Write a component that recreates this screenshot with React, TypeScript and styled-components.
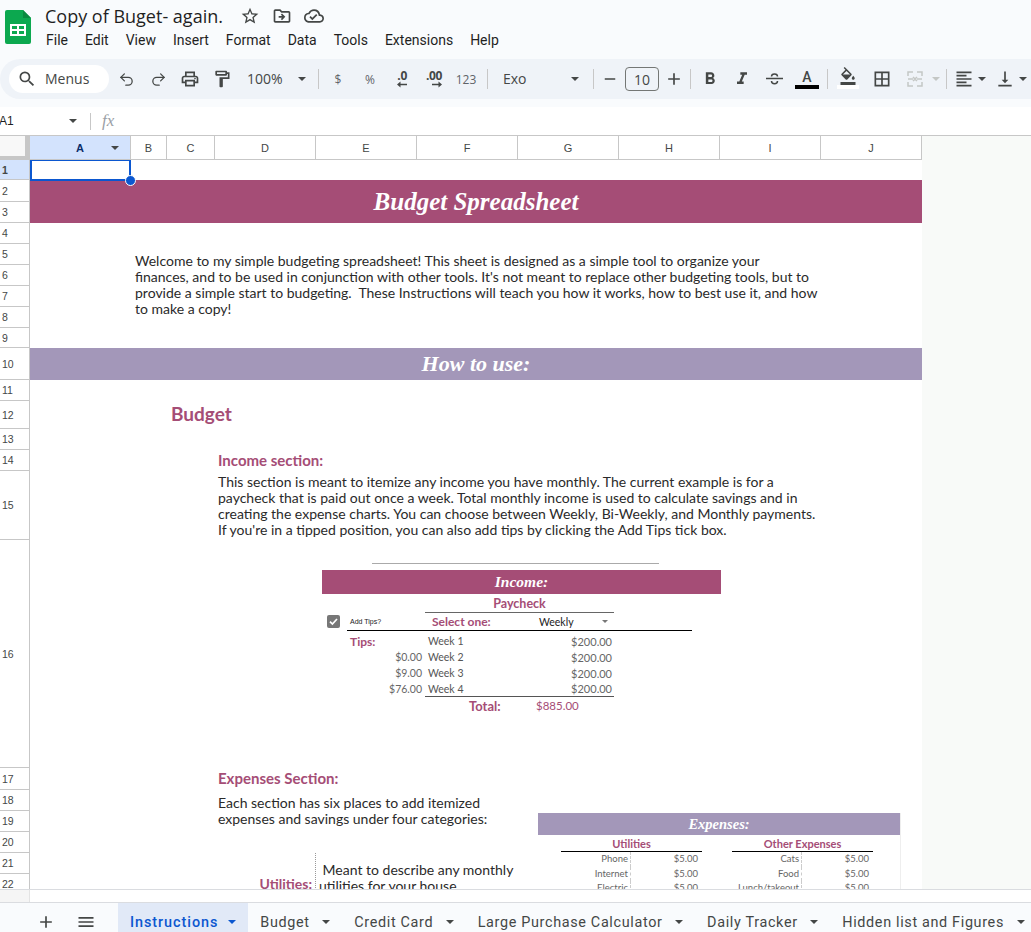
import React from 'react';
import styled, { createGlobalStyle } from 'styled-components';
import { Undo2, Redo2 } from 'lucide-react';
import {
  MdStarBorder,
  MdOutlineDriveFileMove,
  MdOutlineCloudDone,
  MdSearch,
  MdOutlineLocalPrintshop,
  MdOutlineFormatPaint,
  MdRemove,
  MdAdd,
  MdFormatBold,
  MdFormatItalic,
  MdOutlineFormatColorFill,
  MdBorderAll,
  MdFormatAlignLeft,
  MdVerticalAlignBottom,
  MdMenu,
} from 'react-icons/md';

const GlobalStyle = createGlobalStyle`
  html, body {
    margin: 0;
    padding: 0;
    background: #fff;
  }
  * {
    box-sizing: border-box;
  }
`;

const UI_FONT = `'Open Sans', 'Liberation Sans', sans-serif`;
const SHEET_FONT = `'Lato', 'Liberation Sans', sans-serif`;
const SCRIPT_FONT = `'Liberation Serif', serif`;
const PLUM = '#a54d76';
const LILAC = '#a397b9';
const LINE = '#c7c7c7';
const ICON = '#444746';

const columns = ['A', 'B', 'C', 'D', 'E', 'F', 'G', 'H', 'I', 'J'];
const rowHeights = [20, 22, 21, 21, 21, 21, 21, 21, 20, 32, 21, 28, 21, 21, 69, 228, 22, 21, 21, 21, 21, 20];
const menus = ['File', 'Edit', 'View', 'Insert', 'Format', 'Data', 'Tools', 'Extensions', 'Help'];
const tabs = ['Budget', 'Credit Card', 'Large Purchase Calculator', 'Daily Tracker', 'Hidden list and Figures'];
const weeks = [
  { tip: '', week: 'Week 1' },
  { tip: '$0.00', week: 'Week 2' },
  { tip: '$9.00', week: 'Week 3' },
  { tip: '$76.00', week: 'Week 4' },
];
const expenseGroups = [
  { title: 'Utilities', items: ['Phone', 'Internet', 'Electric'] },
  { title: 'Other Expenses', items: ['Cats', 'Food', 'Lunch/takeout'] },
];

const App: React.FC = () => {
  return (
    <Page>
      <GlobalStyle />
      <TopBar>
        <SheetsLogo viewBox="0 0 26 34">
          <path d="M2 0h16l8 8v24a2 2 0 0 1-2 2H2a2 2 0 0 1-2-2V2a2 2 0 0 1 2-2z" fill="#0ca84f" />
          <path d="M18 0l8 8h-8z" fill="#0a8a40" />
          <path d="M5 14h16v12H5zm2 2v3h5v-3zm7 0v3h5v-3zm-7 5v3h5v-3zm7 0v3h5v-3z" fill="#fff" fillRule="evenodd" />
        </SheetsLogo>
        <TitleBlock>
          <TitleRow>
            <DocTitle>Copy of Buget- again.</DocTitle>
            <TitleIcons>
              <MdStarBorder size={20} />
              <MdOutlineDriveFileMove size={20} />
              <MdOutlineCloudDone size={20} />
            </TitleIcons>
          </TitleRow>
          <MenuBar>
            {menus.map(m => <MenuItem key={m}>{m}</MenuItem>)}
          </MenuBar>
        </TitleBlock>
      </TopBar>

      <Toolbar>
        <MenusPill><MdSearch size={20} /><span>Menus</span></MenusPill>
        <Tool $ml={1}><Undo2 size={17} strokeWidth={1.8} /></Tool>
        <Tool><Redo2 size={17} strokeWidth={1.8} /></Tool>
        <Tool><MdOutlineLocalPrintshop size={20} /></Tool>
        <Tool><MdOutlineFormatPaint size={20} /></Tool>
        <ZoomSelect>100%<Caret /></ZoomSelect>
        <Divider $ml={8} $mr={3} />
        <Tool><TextTool>$</TextTool></Tool>
        <Tool><TextTool>%</TextTool></Tool>
        <Tool>
          <DecimalTool>.0
            <svg width="10" height="7" viewBox="0 0 10 7"><path d="M10 2.8H3.5V.5L0 3.5l3.5 3V4.2H10z" fill={ICON} /></svg>
          </DecimalTool>
        </Tool>
        <Tool>
          <DecimalTool>.00
            <svg width="10" height="7" viewBox="0 0 10 7"><path d="M0 2.8h6.5V.5L10 3.5l-3.5 3V4.2H0z" fill={ICON} /></svg>
          </DecimalTool>
        </Tool>
        <Tool><TextTool>123</TextTool></Tool>
        <Divider $ml={5} $mr={3} />
        <FontSelect>Exo<Caret /></FontSelect>
        <Divider $ml={7} $mr={0} />
        <Tool><MdRemove size={18} /></Tool>
        <SizeBox>10</SizeBox>
        <Tool $ml={-1}><MdAdd size={20} /></Tool>
        <Divider $ml={0} $mr={3} />
        <Tool><MdFormatBold size={20} /></Tool>
        <Tool><MdFormatItalic size={20} /></Tool>
        <Tool>
          <svg width="17" height="16" viewBox="0 0 17 16" fill="none" stroke={ICON} strokeWidth="1.5">
            <path d="M0 7.5h17M5.5 5.5c0-3.5 6-3.5 6 0M5.5 10c0 3.5 6 3.5 6 0" />
          </svg>
        </Tool>
        <ColorTool $width={34}><ColorLetter>A</ColorLetter><ColorBar $color="#000" /></ColorTool>
        <Divider $ml={3} $mr={4} />
        <ColorTool $width={32}><FillIcon><MdOutlineFormatColorFill size={18} /></FillIcon><ColorBar $color="#fff" /></ColorTool>
        <Tool $ml={2}><MdBorderAll size={20} /></Tool>
        <Tool $ml={1}>
          <svg width="16" height="16" viewBox="0 0 16 16" fill="none" stroke="#c4c7c5" strokeWidth="1.5">
            <path d="M1 5V1h5M15 5V1h-5M1 11v4h5M15 11v4h-5M1 8h5M6 6l2 2-2 2M15 8h-5M10 6L8 8l2 2" />
          </svg>
        </Tool>
        <CaretSlot><Caret $color="#c4c7c5" /></CaretSlot>
        <Divider $ml={5} $mr={3} />
        <Tool $width={28}><MdFormatAlignLeft size={20} /></Tool>
        <CaretSlot $ml={-1}><Caret /></CaretSlot>
        <Tool $width={28} $ml={4}><MdVerticalAlignBottom size={20} /></Tool>
        <CaretSlot $ml={-1}><Caret /></CaretSlot>
      </Toolbar>

      <FormulaBar>
        <NameBox>A1<Caret /></NameBox>
        <FormulaDivider />
        <FxMark>fx</FxMark>
      </FormulaBar>

      <Sheet>
        <Corner />
        {columns.map((c, i) => (
          <ColumnHead key={c} $col={i + 2} $active={c === 'A'}>
            {c}
            {c === 'A' && <HeadCaret><Caret /></HeadCaret>}
          </ColumnHead>
        ))}
        <OutsideArea />
        {rowHeights.map((_, i) => (
          <RowHead key={i} $row={i + 2} $active={i === 0}>{i + 1}</RowHead>
        ))}

        <SelectedCell><FillHandle /></SelectedCell>

        <Banner $row="3 / 5" $color={PLUM} $size={25}>Budget Spreadsheet</Banner>

        <BodyText $area="6 / 3 / 10 / 12" $pad={4} $raise={2}>
          Welcome to my simple budgeting spreadsheet! This sheet is designed as a simple tool to organize your<br />
          finances, and to be used in conjunction with other tools. It's not meant to replace other budgeting tools, but to<br />
          provide a simple start to budgeting.&nbsp; These Instructions will teach you how it works, how to best use it, and how<br />
          to make a copy!
        </BodyText>

        <Banner $row="11 / 12" $color={LILAC} $size={22}>How to use:</Banner>

        <BudgetHeading>Budget</BudgetHeading>
        <SectionHeading $row={15}>Income section:</SectionHeading>

        <BodyText $area="16 / 5 / 17 / 12" $pad={3}>
          This section is meant to itemize any income you have monthly. The current example is for a<br />
          paycheck that is paid out once a week. Total monthly income is used to calculate savings and in<br />
          creating the expense charts. You can choose between Weekly, Bi-Weekly, and Monthly payments.<br />
          If you're in a tipped position, you can also add tips by clicking the Add Tips tick box.
        </BodyText>

        <IncomeCell>
          <TopRule />
          <IncomeCard>
            <IncomeBand>Income:</IncomeBand>
            <Paycheck>Paycheck</Paycheck>
            <SelectRow>
              <TickBox>
                <svg width="11" height="11" viewBox="0 0 11 11" fill="none" stroke="#fff" strokeWidth="1.7"><path d="M2 5.6l2.4 2.4L9 3" /></svg>
              </TickBox>
              <AddTips>Add Tips?</AddTips>
              <SelectLabel>Select one:</SelectLabel>
              <WeeklyValue>Weekly</WeeklyValue>
              <SmallCaret />
            </SelectRow>
            <BlackRule />
            <WeekTable>
              {weeks.map((w, i) => (
                <WeekRow key={w.week}>
                  {i === 0 ? <TipsLabel>Tips:</TipsLabel> : <TipValue>{w.tip}</TipValue>}
                  <WeekName>{w.week}</WeekName>
                  <WeekAmount>$200.00</WeekAmount>
                </WeekRow>
              ))}
            </WeekTable>
            <TotalRow>
              <TotalLabel>Total:</TotalLabel>
              <TotalValue>$885.00</TotalValue>
            </TotalRow>
          </IncomeCard>
        </IncomeCell>

        <SectionHeading $row={18}>Expenses Section:</SectionHeading>

        <BodyText $area="19 / 5 / 21 / 9" $pad={3}>
          Each section has six places to add itemized<br />
          expenses and savings under four categories:
        </BodyText>

        <UtilitiesLabel>Utilities:</UtilitiesLabel>
        <UtilityNote>
          &nbsp;Meant to describe any monthly<br />
          utilities for your house.
        </UtilityNote>

        <ExpenseCell>
          <ExpenseBand>Expenses:</ExpenseBand>
          <ExpenseGroups>
            {expenseGroups.map(g => (
              <div key={g.title}>
                <GroupTitle>{g.title}</GroupTitle>
                {g.items.map(item => (
                  <ExpenseRow key={item}>
                    <ExpenseName>{item}</ExpenseName>
                    <ExpenseValue>$5.00</ExpenseValue>
                  </ExpenseRow>
                ))}
              </div>
            ))}
          </ExpenseGroups>
        </ExpenseCell>
      </Sheet>

      <ScrollStrip><ScrollStub /></ScrollStrip>

      <TabBar>
        <TabAction $ml={36}><MdAdd size={20} /></TabAction>
        <TabAction $ml={20}><MdMenu size={20} /></TabAction>
        <Tab $active>Instructions<Caret $color="#0b57d0" /></Tab>
        {tabs.map(t => <Tab key={t}>{t}<Caret /></Tab>)}
      </TabBar>
    </Page>
  );
};

const Page = styled.div`
  width: 1031px;
  height: 932px;
  overflow: hidden;
  display: flex;
  flex-direction: column;
  background: #f9fbfd;
  font-family: ${UI_FONT};
  color: ${ICON};
`;

const TopBar = styled.header`
  height: 59px;
  flex: none;
  display: flex;
  padding: 10px 0 0 5px;
`;

const SheetsLogo = styled.svg`
  width: 26px;
  height: 34px;
  flex: none;
`;

const TitleBlock = styled.div`
  margin-left: 14px;
  margin-top: -6px;
`;

const TitleRow = styled.div`
  display: flex;
  align-items: center;
  height: 24px;
`;

const DocTitle = styled.div`
  font-size: 18px;
  color: #1f1f1f;
  width: 195px;
  white-space: nowrap;
`;

const TitleIcons = styled.div`
  display: flex;
  gap: 12px;
  color: ${ICON};
`;

const MenuBar = styled.nav`
  display: flex;
  gap: 17px;
  margin: 2px 0 0 1px;
`;

const MenuItem = styled.span`
  font-family: 'Roboto', sans-serif;
  font-size: 14px;
  line-height: 20px;
  color: #1f1f1f;
`;

const Toolbar = styled.div`
  height: 40px;
  flex: none;
  display: flex;
  align-items: center;
  padding-left: 9px;
  background: #eff3f8;
  border-radius: 20px 0 0 20px;
`;

const MenusPill = styled.div`
  width: 100px;
  height: 28px;
  flex: none;
  display: flex;
  align-items: center;
  gap: 8px;
  padding-left: 8px;
  background: #fff;
  border-radius: 14px;
  font-size: 14px;
  color: #444746;
  span {
    margin-bottom: 2px;
  }
`;

const Tool = styled.div<{ $width?: number; $ml?: number }>`
  width: ${p => p.$width ?? 32}px;
  height: 28px;
  flex: none;
  margin-left: ${p => p.$ml ?? 0}px;
  display: flex;
  align-items: center;
  justify-content: center;
  color: ${ICON};
`;

const ZoomSelect = styled.div`
  width: 72px;
  flex: none;
  display: flex;
  align-items: center;
  justify-content: space-between;
  padding: 0 4px 1px 9px;
  font-size: 14px;
`;

const FontSelect = styled.div`
  width: 95px;
  flex: none;
  display: flex;
  align-items: center;
  justify-content: space-between;
  padding: 0 7px 1px 12px;
  font-size: 14px;
`;

const Divider = styled.div<{ $ml: number; $mr: number }>`
  width: 1px;
  height: 20px;
  flex: none;
  margin: 0 ${p => p.$mr}px 0 ${p => p.$ml}px;
  background: #c7c7c7;
`;

const TextTool = styled.span`
  font-size: 12px;
  color: #5f6368;
`;

const DecimalTool = styled.span`
  display: flex;
  flex-direction: column;
  align-items: flex-end;
  font-size: 12px;
  font-weight: 700;
  line-height: 11px;
  letter-spacing: -0.3px;
  color: ${ICON};
`;

const SizeBox = styled.div`
  width: 34px;
  height: 24px;
  flex: none;
  margin-left: -1px;
  display: flex;
  align-items: center;
  justify-content: center;
  border: 1px solid #747775;
  border-radius: 4px;
  font-size: 14px;
`;

const ColorTool = styled.div<{ $width: number }>`
  position: relative;
  width: ${p => p.$width}px;
  height: 28px;
  flex: none;
  display: flex;
  justify-content: center;
  padding-top: 3px;
  color: ${ICON};
`;

const FillIcon = styled.span`
  display: flex;
  margin-top: -1px;
`;

const ColorLetter = styled.span`
  font-family: 'Roboto', sans-serif;
  font-size: 14px;
  font-weight: 500;
  line-height: 18px;
`;

const ColorBar = styled.div<{ $color: string }>`
  position: absolute;
  left: 5px;
  right: 5px;
  bottom: 4px;
  height: 4px;
  background: ${p => p.$color};
`;

const CaretSlot = styled.div<{ $ml?: number }>`
  width: 10px;
  flex: none;
  margin-left: ${p => p.$ml ?? 0}px;
  display: flex;
  justify-content: center;
`;

const Caret = styled.i<{ $color?: string }>`
  display: inline-block;
  flex: none;
  width: 0;
  height: 0;
  border-left: 4px solid transparent;
  border-right: 4px solid transparent;
  border-top: 4px solid ${p => p.$color ?? ICON};
`;

const FormulaBar = styled.div`
  height: 29px;
  flex: none;
  margin-top: 8px;
  display: flex;
  align-items: center;
  background: #fff;
  border-bottom: 1px solid ${LINE};
`;

const NameBox = styled.div`
  width: 78px;
  display: flex;
  align-items: center;
  justify-content: space-between;
  margin-left: -1px;
  font-family: 'Liberation Sans', sans-serif;
  font-size: 12px;
  color: #1f1f1f;
`;

const FormulaDivider = styled.div`
  width: 1px;
  height: 17px;
  margin-left: 13px;
  background: #c7c7c7;
`;

const FxMark = styled.span`
  margin-left: 11px;
  font-family: 'Liberation Serif', serif;
  font-style: italic;
  font-size: 17px;
  color: #9aa0a6;
`;

const Sheet = styled.main`
  position: relative;
  height: 753px;
  flex: none;
  overflow: hidden;
  display: grid;
  grid-template-columns: 30px 101px 36px 48px repeat(7, 101px) 1fr;
  grid-template-rows: 24px ${rowHeights.map(h => `${h}px`).join(' ')};
  background: #fff;
`;

const Corner = styled.div`
  grid-area: 1 / 1;
  background: #f8f8f8;
  border-right: 5px solid ${LINE};
  border-bottom: 4px solid ${LINE};
`;

const ColumnHead = styled.div<{ $col: number; $active: boolean }>`
  position: relative;
  grid-area: 1 / ${p => p.$col};
  display: flex;
  align-items: center;
  justify-content: center;
  border-right: 1px solid ${LINE};
  border-bottom: 1px solid ${LINE};
  background: ${p => (p.$active ? '#d3e3fd' : '#fff')};
  font-family: 'Liberation Sans', sans-serif;
  font-size: 11px;
  font-weight: ${p => (p.$active ? 700 : 400)};
  color: ${p => (p.$active ? '#0b2e6b' : '#444746')};
`;

const HeadCaret = styled.span`
  position: absolute;
  right: 11px;
  top: 10px;
  display: flex;
`;

const OutsideArea = styled.div`
  grid-area: 1 / 12 / 24 / 13;
  background: #f8faf8;
`;

const RowHead = styled.div<{ $row: number; $active: boolean }>`
  grid-area: ${p => p.$row} / 1;
  display: flex;
  align-items: center;
  padding-left: 2px;
  border-right: 1px solid ${LINE};
  border-bottom: 1px solid ${LINE};
  background: ${p => (p.$active ? '#d3e3fd' : '#fff')};
  font-family: 'Liberation Sans', sans-serif;
  font-size: 10.5px;
  font-weight: ${p => (p.$active ? 700 : 400)};
  color: #444746;
`;

const SelectedCell = styled.div`
  position: relative;
  z-index: 2;
  grid-area: 2 / 2;
  margin-bottom: -1px;
  border: 2px solid #0b57d0;
  border-top-width: 1px;
`;

const FillHandle = styled.span`
  position: absolute;
  right: -7px;
  bottom: -7px;
  width: 11px;
  height: 11px;
  border-radius: 50%;
  background: #0b57d0;
  border: 1px solid #fff;
`;

const Banner = styled.div<{ $row: string; $color: string; $size: number }>`
  grid-row: ${p => p.$row};
  grid-column: 2 / 12;
  display: flex;
  align-items: center;
  justify-content: center;
  background: ${p => p.$color};
  color: #fff;
  font-family: ${SCRIPT_FONT};
  font-style: italic;
  font-weight: 700;
  font-size: ${p => p.$size}px;
  white-space: nowrap;
`;

const BodyText = styled.div<{ $area: string; $pad: number; $raise?: number }>`
  grid-area: ${p => p.$area};
  align-self: center;
  margin-bottom: ${p => p.$raise ?? 0}px;
  padding-left: ${p => p.$pad}px;
  font-family: ${SHEET_FONT};
  font-size: 14px;
  line-height: 16px;
  color: #2a2a2a;
  white-space: nowrap;
`;

const BudgetHeading = styled.div`
  grid-area: 13 / 4 / 14 / 8;
  align-self: center;
  margin-bottom: 3px;
  padding-left: 4px;
  font-family: ${SHEET_FONT};
  font-size: 19px;
  font-weight: 700;
  color: ${PLUM};
`;

const SectionHeading = styled.div<{ $row: number }>`
  grid-area: ${p => p.$row} / 5 / ${p => p.$row + 1} / 9;
  align-self: center;
  margin-bottom: 2px;
  padding-left: 3px;
  font-family: ${SHEET_FONT};
  font-size: 15px;
  font-weight: 700;
  color: ${PLUM};
`;

const IncomeCell = styled.div`
  grid-area: 17 / 2 / 18 / 12;
  padding: 23px 0 0 292px;
`;

const TopRule = styled.div`
  width: 287px;
  height: 1px;
  margin: 0 0 6px 50px;
  background: #aaa;
`;

const IncomeCard = styled.div`
  width: 399px;
  font-family: ${SHEET_FONT};
`;

const IncomeBand = styled.div`
  height: 24px;
  display: flex;
  align-items: center;
  justify-content: center;
  background: ${PLUM};
  color: #fff;
  font-family: ${SCRIPT_FONT};
  font-style: italic;
  font-weight: 700;
  font-size: 15.5px;
`;

const Paycheck = styled.div`
  width: 189px;
  height: 19px;
  margin-left: 103px;
  display: flex;
  align-items: center;
  justify-content: center;
  border-bottom: 1px solid #666;
  color: ${PLUM};
  font-size: 12.5px;
  font-weight: 700;
`;

const SelectRow = styled.div`
  height: 17px;
  display: flex;
  align-items: center;
  padding-left: 5px;
`;

const TickBox = styled.div`
  width: 13px;
  height: 13px;
  flex: none;
  display: flex;
  align-items: center;
  justify-content: center;
  border-radius: 2px;
  background: #777;
`;

const AddTips = styled.span`
  width: 82px;
  margin-left: 10px;
  flex: none;
  font-family: 'Liberation Sans', sans-serif;
  font-size: 7px;
  color: #222;
`;

const SelectLabel = styled.span`
  width: 107px;
  flex: none;
  font-size: 12px;
  font-weight: 700;
  color: ${PLUM};
`;

const WeeklyValue = styled.span`
  width: 63px;
  flex: none;
  font-size: 10.5px;
  color: #222;
`;

const SmallCaret = styled.i`
  width: 0;
  height: 0;
  border-left: 3px solid transparent;
  border-right: 3px solid transparent;
  border-top: 3px solid #777;
`;

const BlackRule = styled.div`
  width: 345px;
  height: 1px;
  margin-left: 25px;
  background: #000;
`;

const WeekTable = styled.div`
  margin-top: 2px;
`;

const WeekRow = styled.div`
  height: 16px;
  display: grid;
  grid-template-columns: 100px 6px 184px;
  align-items: center;
  font-size: 10.5px;
  color: #555;
  &:last-child {
    height: 15px;
  }
`;

const TipsLabel = styled.span`
  padding-left: 28px;
  font-size: 12px;
  font-weight: 700;
  color: ${PLUM};
`;

const TipValue = styled.span`
  text-align: right;
  color: #666;
`;

const WeekName = styled.span`
  grid-column: 3;
  grid-row: 1;
  width: 184px;
`;

const WeekAmount = styled.span`
  grid-column: 3;
  grid-row: 1;
  width: 184px;
  text-align: right;
  font-size: 11px;
  color: #666;
`;

const TotalRow = styled.div`
  width: 189px;
  margin-left: 103px;
  height: 18px;
  display: flex;
  align-items: center;
  padding-left: 44px;
  border-top: 1px solid #555;
`;

const TotalLabel = styled.span`
  width: 67px;
  flex: none;
  font-size: 13px;
  font-weight: 700;
  color: ${PLUM};
`;

const TotalValue = styled.span`
  font-size: 11.5px;
  color: ${PLUM};
`;

const UtilitiesLabel = styled.div`
  grid-area: 23 / 4 / 24 / 6;
  padding-right: 4px;
  text-align: right;
  font-family: ${SHEET_FONT};
  font-size: 14px;
  font-weight: 700;
  line-height: 20px;
  color: ${PLUM};
`;

const UtilityNote = styled.div`
  grid-area: 22 / 6 / 24 / 9;
  margin-left: -1px;
  padding: 9px 0 0 3px;
  border-left: 1px dotted #999;
  font-family: ${SHEET_FONT};
  font-size: 14px;
  line-height: 16px;
  color: #2a2a2a;
  white-space: nowrap;
`;

const ExpenseCell = styled.div`
  grid-area: 20 / 8 / 24 / 12;
  height: 78px;
  width: 363px;
  margin: 2px 0 0 20px;
  overflow: hidden;
  border-right: 1px solid #eee;
  font-family: ${SHEET_FONT};
`;

const ExpenseBand = styled.div`
  height: 22px;
  display: flex;
  align-items: center;
  justify-content: center;
  background: ${LILAC};
  color: #fff;
  font-family: ${SCRIPT_FONT};
  font-style: italic;
  font-weight: 700;
  font-size: 14.5px;
`;

const ExpenseGroups = styled.div`
  display: grid;
  grid-template-columns: 141px 141px;
  gap: 30px;
  padding-left: 23px;
`;

const GroupTitle = styled.div`
  height: 17px;
  display: flex;
  align-items: center;
  justify-content: center;
  border-bottom: 1px solid #000;
  font-size: 11px;
  font-weight: 700;
  color: ${PLUM};
`;

const ExpenseRow = styled.div`
  height: 14.6px;
  display: grid;
  grid-template-columns: 70px 71px;
  font-size: 9.5px;
  line-height: 14.6px;
  color: #666;
`;

const ExpenseName = styled.span`
  padding-right: 2px;
  text-align: right;
  border-right: 1px dashed #ccc;
  white-space: nowrap;
`;

const ExpenseValue = styled.span`
  padding-right: 4px;
  text-align: right;
`;

const ScrollStrip = styled.div`
  height: 14px;
  flex: none;
  display: flex;
  background: #fff;
  border-top: 1px solid #dadce0;
  border-bottom: 1px solid #dadce0;
`;

const ScrollStub = styled.div`
  width: 30px;
  background: #f5f5f5;
  border-right: 1px solid #e3e3e3;
`;

const TabBar = styled.footer`
  height: 38px;
  flex: none;
  display: flex;
  align-items: stretch;
  white-space: nowrap;
`;

const TabAction = styled.div<{ $ml: number }>`
  width: 20px;
  flex: none;
  margin-left: ${p => p.$ml}px;
  display: flex;
  align-items: center;
  color: ${ICON};
`;

const Tab = styled.div<{ $active?: boolean }>`
  flex: none;
  display: flex;
  align-items: center;
  gap: ${p => (p.$active ? 10 : 12.5)}px;
  padding: 0 12px;
  margin-left: ${p => (p.$active ? 22 : 0)}px;
  background: ${p => (p.$active ? '#e1e9f7' : 'transparent')};
  color: ${p => (p.$active ? '#0b57d0' : '#444746')};
  font-family: 'Roboto', sans-serif;
  font-size: 14.4px;
  font-weight: ${p => (p.$active ? 500 : 400)};
  letter-spacing: ${p => (p.$active ? 0.95 : 0.66)}px;
`;

export default App;
